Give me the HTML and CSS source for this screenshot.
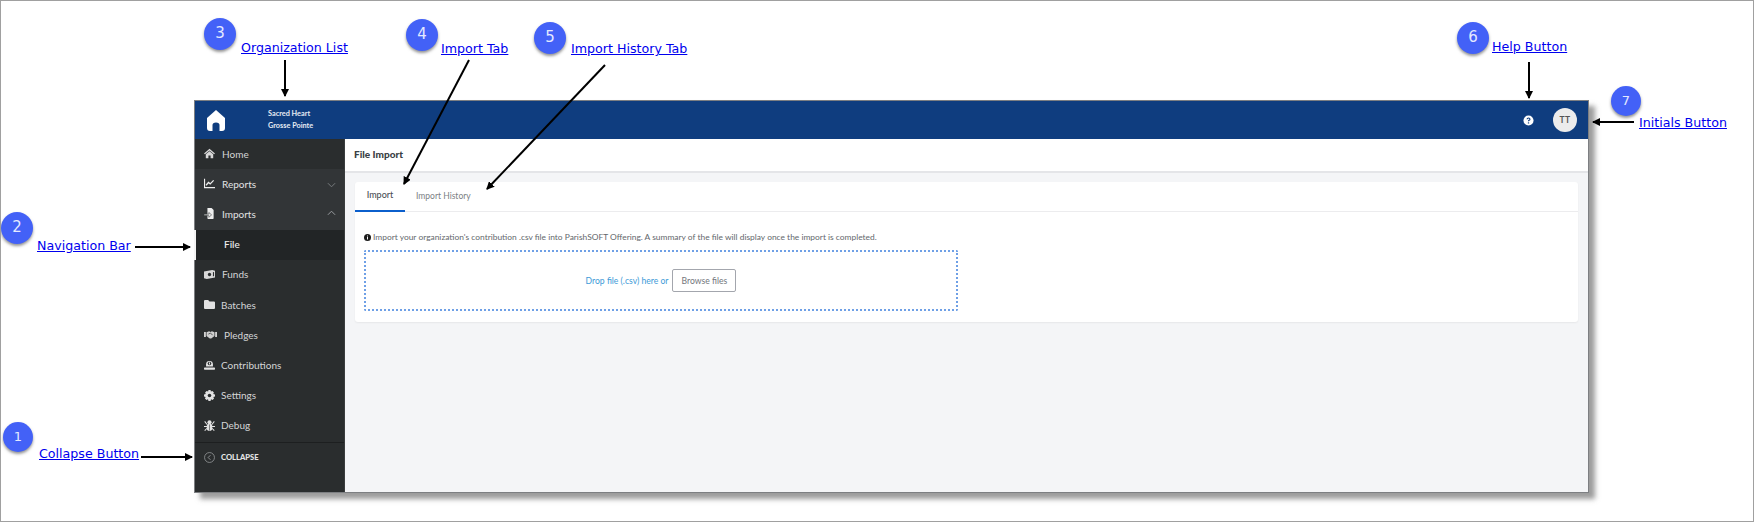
FILE: index.html
```html
<!DOCTYPE html>
<html lang="en">
<head>
<meta charset="utf-8">
<title>File Import</title>
<link rel="stylesheet" href="styles.css">
</head>
<body>
<div class="canvas">
  <div class="app">
    <header class="topbar">
      <svg class="logo" viewBox="0 0 18 21"><path d="M9 0 L18 8 V18 Q18 21 15 21 H12.5 V15 Q12.5 12.5 9 12.5 Q5.5 12.5 5.5 15 V21 H3 Q0 21 0 18 V8 Z" fill="#fff"/></svg>
      <div class="org"><div>Sacred Heart</div><div>Grosse Pointe</div></div>
      <svg class="help" viewBox="0 0 12 12"><circle cx="6" cy="6" r="5.5" fill="#fff"/><path d="M4.4 4.7 Q4.5 3.2 6 3.2 Q7.6 3.2 7.6 4.5 Q7.6 5.3 6.6 5.8 Q6 6.1 6 6.9" fill="none" stroke="#0f3d7f" stroke-width="1.2"/><circle cx="6" cy="8.6" r=".8" fill="#0f3d7f"/></svg>
      <div class="avatar">TT</div>
    </header>
    <div class="body">
      <nav class="sidebar">
        <a class="nav-item"><svg class="ico" viewBox="0 0 16 14"><path d="M8 0 L16 7 L14.6 8 L8 2.6 L1.4 8 L0 7 Z M2.6 8.2 L8 3.9 L13.4 8.2 V14 H9.6 V10 H6.4 V14 H2.6 Z" fill="#d8d8d8"/></svg><span>Home</span></a>
        <a class="nav-item raised"><svg class="ico" viewBox="0 0 16 14"><path d="M0 0 H1.6 V12 H16 V14 H0 Z" fill="#eee"/><path d="M3 9.5 L6.5 5.5 L9 7.5 L14 2.5" fill="none" stroke="#eee" stroke-width="1.8"/></svg><span>Reports</span><svg class="chev down" viewBox="0 0 10 6"><path d="M1 1 L5 5 L9 1" fill="none" stroke="#777b7d" stroke-width="1.1"/></svg></a>
        <a class="nav-item raised"><svg class="ico" viewBox="0 0 16 16"><path d="M6 0 H11 L14 3 V15 Q14 16 13 16 H6 Q5 16 5 15 V0 Z" fill="#eee"/><path d="M0 9 H7 V6.5 L11 10 L7 13.5 V11 H0 Z" fill="#eee" stroke="#323537" stroke-width=".8"/></svg><span>Imports</span><svg class="chev up" viewBox="0 0 10 6"><path d="M1 5 L5 1 L9 5" fill="none" stroke="#9a9da0" stroke-width="1.1"/></svg></a>
        <a class="nav-item sub"><span>File</span></a>
        <a class="nav-item"><svg class="ico" viewBox="0 0 16 13"><path d="M0 2 L12 0 L16 1 V11 L4 13 L0 12 Z" fill="#d8d8d8"/><circle cx="8" cy="6.5" r="2.4" fill="#2a2d2e"/><rect x="13" y="3" width="1.6" height="6" fill="#2a2d2e"/></svg><span>Funds</span></a>
        <a class="nav-item tight"><svg class="ico" viewBox="0 0 16 13"><path d="M0 1.5 Q0 0 1.5 0 H6 L8 2 H14.5 Q16 2 16 3.5 V11.5 Q16 13 14.5 13 H1.5 Q0 13 0 11.5 Z" fill="#e2e2e2"/></svg><span>Batches</span></a>
        <a class="nav-item wide"><svg class="ico" viewBox="0 0 18 11"><rect x="0" y="2" width="2.6" height="7" fill="#d0d0d0"/><rect x="15.4" y="2" width="2.6" height="7" fill="#d0d0d0"/><path d="M3.5 2.5 L7 1 L9 2 L11 1 L14.5 2.5 V7.5 L10 11 H8 L3.5 7.5 Z" fill="#d0d0d0"/><path d="M6 5 L9 3.5 L12 6.5" fill="none" stroke="#2a2d2e"/></svg><span>Pledges</span></a>
        <a class="nav-item tight"><svg class="ico" viewBox="0 0 16 16"><path d="M3 8 A5 5 0 1 1 13 8 V11 H3 Z" fill="#e2e2e2"/><circle cx="8" cy="6.5" r="2.6" fill="#2a2d2e"/><rect x="7.2" y="5" width="1.6" height="3" fill="#e2e2e2"/><rect x="0" y="12.5" width="16" height="3" rx="1" fill="#e2e2e2"/></svg><span>Contributions</span></a>
        <a class="nav-item tight"><svg class="ico" viewBox="0 0 16 16"><path d="M6.5 0 H9.5 L10 2.3 L12.2 1.3 L14.4 3.5 L13.4 5.7 L16 6.5 V9.5 L13.6 10.2 L14.6 12.4 L12.4 14.6 L10.2 13.6 L9.5 16 H6.5 L5.8 13.6 L3.6 14.6 L1.4 12.4 L2.4 10.2 L0 9.5 V6.5 L2.6 5.7 L1.6 3.5 L3.8 1.3 L6 2.3 Z" fill="#e2e2e2"/><circle cx="8" cy="8" r="2.6" fill="#2a2d2e"/></svg><span>Settings</span></a>
        <a class="nav-item tight"><svg class="ico" viewBox="0 0 16 16"><circle cx="8" cy="3.2" r="3" fill="#e2e2e2"/><rect x="4" y="5" width="8" height="11" rx="4" fill="#e2e2e2"/><path d="M1 2 L4.5 6.5 M15 2 L11.5 6.5 M0 9.5 H16 M1 15.5 L4.5 12 M15 15.5 L11.5 12" stroke="#e2e2e2" stroke-width="1.5" fill="none"/><rect x="7.6" y="6.5" width=".8" height="9" fill="#2a2d2e"/></svg><span>Debug</span></a>
        <div class="collapse"><svg class="ico" viewBox="0 0 12 12"><circle cx="6" cy="6" r="5.4" fill="none" stroke="#a0a3a5" stroke-width=".8"/><path d="M7 3.5 L4.5 6 L7 8.5" fill="none" stroke="#a0a3a5" stroke-width=".9"/></svg><span>COLLAPSE</span></div>
      </nav>
      <main class="main">
        <div class="pagehead">File Import</div>
        <section class="card">
          <div class="tabs"><div class="tab active">Import</div><div class="tab">Import History</div></div>
          <div class="panel">
            <p class="note"><svg class="info" viewBox="0 0 10 10"><circle cx="5" cy="5" r="5" fill="#1c1c1c"/><rect x="4.3" y="4.2" width="1.4" height="3.6" fill="#fff"/><rect x="4.3" y="2.2" width="1.4" height="1.3" fill="#fff"/></svg>Import your organization's contribution .csv file into ParishSOFT Offering. A summary of the file will display once the import is completed.</p>
            <div class="drop"><span>Drop file (.csv) here or</span><button class="browse" type="button">Browse files</button></div>
          </div>
        </section>
      </main>
    </div>
  </div>

  <svg class="arrows" viewBox="0 0 1754 522">
    <defs><marker id="head" markerWidth="4" markerHeight="4" refX="3.5" refY="2" orient="auto"><path d="M0 0 L4 2 L0 4 Z" fill="#000"/></marker></defs>
    <g stroke="#000" stroke-width="2" fill="none">
      <path d="M285 60 V96" marker-end="url(#head)"/>
      <path d="M469 60 L404 184" marker-end="url(#head)"/>
      <path d="M605 65 L487 189" marker-end="url(#head)"/>
      <path d="M1529 62 V98" marker-end="url(#head)"/>
      <path d="M1634 122 H1593" marker-end="url(#head)"/>
      <path d="M135 247 H190" marker-end="url(#head)"/>
      <path d="M141 457 H192" marker-end="url(#head)"/>
    </g>
  </svg>

  <div class="callout c3"><span class="badge">3</span><a class="link">Organization List</a></div>
  <div class="callout c4"><span class="badge">4</span><a class="link">Import Tab</a></div>
  <div class="callout c5"><span class="badge">5</span><a class="link">Import History Tab</a></div>
  <div class="callout c6"><span class="badge">6</span><a class="link">Help Button</a></div>
  <div class="callout c7"><span class="badge small">7</span><a class="link">Initials Button</a></div>
  <div class="callout c2"><span class="badge">2</span><a class="link">Navigation Bar</a></div>
  <div class="callout c1"><span class="badge small">1</span><a class="link">Collapse Button</a></div>
</div>
</body>
</html>
```
FILE: styles.css
```css
* { box-sizing: border-box; }
html, body { margin: 0; padding: 0; background: #fff; }
.canvas {
  position: relative;
  width: 1754px;
  height: 522px;
  border: 1px solid #a0a0a0;
  overflow: hidden;
  font-family: "Lato", "Open Sans", sans-serif;
}
.app {
  position: absolute;
  left: 193px;
  top: 99px;
  width: 1395px;
  height: 393px;
  display: flex;
  flex-direction: column;
  border: 1px solid #7d7f82;
  background: #f4f5f7;
  box-shadow: 6px 6px 5px rgba(90, 90, 90, .6);
}
.topbar {
  height: 38px;
  flex: none;
  background: #0f3d7f;
  display: flex;
  align-items: center;
  color: #fff;
  padding: 0 11px 0 12px;
}
.logo { width: 18px; height: 21px; flex: none; }
.org {
  margin-left: 43px;
  font-size: 7.3px;
  font-weight: 700;
  line-height: 12px;
  color: #e6ebf3;
  flex: 1;
}
.help { width: 11px; height: 11px; margin-right: 19px; }
.avatar {
  width: 24px;
  height: 24px;
  border-radius: 50%;
  background: #ececec;
  color: #555;
  font-size: 8.5px;
  font-weight: 700;
  letter-spacing: .3px;
  display: flex;
  align-items: center;
  justify-content: center;
}
.body { flex: 1; display: flex; min-height: 0; }
.sidebar {
  width: 150px;
  flex: none;
  background: #2a2d2e;
  display: flex;
  flex-direction: column;
  border-right: 1px solid #3a3d3e;
}
.nav-item {
  height: 30.2px;
  flex: none;
  display: flex;
  align-items: center;
  padding: 0 0 1px 9px;
  color: #d4d5d6;
  font-size: 10px;
}
.nav-item .ico { margin-right: 7px; }
.nav-item.tight .ico { margin-right: 6px; }
.nav-item.raised { background: #323537; color: #e2e3e4; }
.nav-item.sub {
  background: #222526;
  color: #f0f0f0;
  font-weight: 500;
  padding-left: 28px;
  border-left: 2px solid #f4f4f4;
  margin-left: -1px;
}
.ico { width: 11px; height: 11px; flex: none; }
.wide .ico { width: 13px; }
.chev { width: 9px; height: 6px; margin-left: auto; margin-right: 8px; }
.chev.down { margin-top: 3px; }
.chev.up { margin-top: -2px; }
.collapse {
  margin-top: 1px;
  padding-top: 9px;
  padding-left: 9px;
  border-top: 1px solid #1d1f20;
  display: flex;
  align-items: flex-start;
  color: #e4e4e4;
  font-size: 7.6px;
  font-weight: 900;
}
.collapse .ico { margin-right: 6px; }
.collapse span { line-height: 10px; }
.main { flex: 1; min-width: 0; display: flex; flex-direction: column; }
.pagehead {
  height: 34px;
  flex: none;
  background: #fff;
  border-bottom: 2px solid #e4e5e8;
  display: flex;
  align-items: center;
  padding: 0 0 2px 9px;
  font-size: 10px;
  font-weight: 900;
  color: #3a3f45;
}
.card {
  margin: 9px 10px 0;
  height: 140px;
  background: #fff;
  border-radius: 3px;
  box-shadow: 0 1px 2px rgba(0, 0, 0, .06);
  display: flex;
  flex-direction: column;
}
.tabs {
  height: 30px;
  flex: none;
  display: flex;
  border-bottom: 1px solid #ececee;
}
.tab {
  padding: 0 11px 3px;
  height: 30px;
  display: flex;
  align-items: center;
  font-size: 8.5px;
  color: #7b7f85;
}
.tab.active {
  width: 50px;
  justify-content: center;
  padding: 0 0 3px;
  color: #4a4f55;
  font-size: 9px;
  font-weight: 500;
  border-bottom: 2px solid #0b5fcc;
}
.panel { padding: 19px 9px 0; display: flex; flex-direction: column; }
.note {
  margin: 0 0 7px;
  font-size: 8.42px;
  line-height: 12px;
  color: #63676c;
  display: flex;
  align-items: center;
  white-space: nowrap;
}
.info { width: 7px; height: 7px; margin-right: 2px; flex: none; }
.drop {
  width: 594px;
  height: 61px;
  border: 2px dotted #6fa0e6;
  border-radius: 2px;
  display: flex;
  align-items: center;
  justify-content: center;
  gap: 4px;
  font-size: 8.6px;
  color: #3d9bd8;
}
.browse {
  width: 64px;
  height: 23px;
  padding: 0;
  background: #fff;
  border: 1px solid #a3a6ad;
  border-radius: 2px;
  color: #72767c;
  font: inherit;
}
.arrows {
  position: absolute;
  left: -1px;
  top: -1px;
  width: 1754px;
  height: 522px;
  pointer-events: none;
}
.callout { position: absolute; height: 40px; }
.badge {
  position: absolute;
  left: 0;
  top: 0;
  width: 32px;
  height: 32px;
  border-radius: 50%;
  background: #4361f7;
  color: #e4e9ff;
  box-shadow: 0 2px 3px rgba(60, 60, 60, .55);
  font: 15px/31px "DejaVu Sans", sans-serif;
  text-align: center;
}
.badge.small { width: 30px; height: 30px; line-height: 29px; font-size: 13px; }
.link {
  position: absolute;
  white-space: nowrap;
  color: #0000ee;
  text-decoration: underline;
  font: 12.65px/16px "DejaVu Sans", sans-serif;
}
.c3 { left: 203px; top: 17px; } .c3 .link { left: 37px; top: 22px; }
.c4 { left: 405px; top: 18px; } .c4 .link { left: 35px; top: 22px; }
.c5 { left: 533px; top: 21px; } .c5 .link { left: 37px; top: 19px; }
.c6 { left: 1456px; top: 21px; } .c6 .link { left: 35px; top: 17px; }
.c7 { left: 1610px; top: 85px; } .c7 .link { left: 28px; top: 29px; }
.c2 { left: 0; top: 211px; } .c2 .link { left: 36px; top: 26px; }
.c1 { left: 2px; top: 421px; } .c1 .link { left: 36px; top: 24px; }
```
